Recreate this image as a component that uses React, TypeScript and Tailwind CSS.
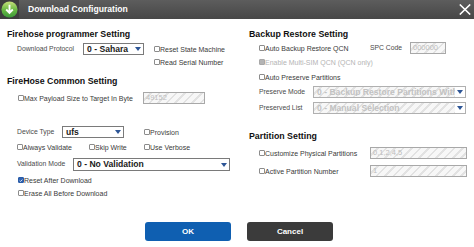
import React from 'react';

const font = { fontFamily: '"Liberation Sans", Arial, sans-serif' };

// hatched look used by the disabled boxes
const hatch =
  'bg-[repeating-linear-gradient(135deg,#f7f7f7_0px,#f7f7f7_4px,#e2e2e2_4px,#e2e2e2_6px)]';

function Check({ label, checked, disabled }: { label: string; checked?: boolean; disabled?: boolean }) {
  let box = 'border-[#8c8c8c] bg-white';
  if (checked) box = 'border-[#2a5ca8] bg-[#2f62b0]';
  if (disabled) box = 'border-[#a8a8a8] bg-[#b4b4b4]';
  return (
    <div className="flex items-center whitespace-nowrap">
      <span className={`w-[6px] h-[6px] rounded-[1px] border flex items-center justify-center ${box}`}>
        {checked && !disabled && (
          <svg viewBox="0 0 6 6" className="w-[5px] h-[5px]">
            <path d="M1 3 L2.4 4.4 L5 1.6" stroke="white" strokeWidth="1.2" fill="none" />
          </svg>
        )}
      </span>
      <span className={`text-[7px] leading-none ${disabled ? 'text-[#b4b4b4]' : 'text-[#3a3a3a]'}`}>{label}</span>
    </div>
  );
}

function Arrow() {
  return (
    <svg viewBox="0 0 6 4" className="w-[6px] h-[4px]">
      <path d="M0 0 H6 L3 4 Z" fill="#2d5596" />
    </svg>
  );
}

function Select({ value, className, disabled }: { value: string; className: string; disabled?: boolean }) {
  return (
    <div
      className={`h-full flex items-center border ${disabled ? `border-[#b0b0b0] ${hatch}` : 'border-[#7a7a7a] bg-white'} ${className}`}
    >
      <span
        className={`flex-1 pl-[3px] overflow-hidden whitespace-nowrap text-[8.6px] font-bold leading-none ${disabled ? 'text-[#c2c2c2]' : 'text-[#1a1a1a]'}`}
      >
        {value}
      </span>
      <span className={`h-full w-[10px] flex items-center justify-center ${disabled ? 'bg-white' : ''}`}>
        <Arrow />
      </span>
    </div>
  );
}

function Field({ value, className }: { value: string; className: string }) {
  return (
    <div className={`h-full flex items-center border border-[#a8a8a8] ${hatch} ${className}`}>
      <span className="pl-[2px] text-[7.5px] leading-none text-[#bdbdbd]">{value}</span>
    </div>
  );
}

function Label({ text, className }: { text: string; className: string }) {
  return <span className={`text-[6.8px] leading-none text-[#4a4a4a] whitespace-nowrap ${className}`}>{text}</span>;
}

function Header({ text, className = '' }: { text: string; className?: string }) {
  return <div className={`h-[11px] flex items-center text-[8.8px] font-bold text-[#111] leading-none ${className}`}>{text}</div>;
}

export default function App() {
  return (
    <div className="w-[474px] h-[247px] bg-white overflow-hidden" style={font}>
      {/* title bar */}
      <div className="h-[19px] flex items-center bg-gradient-to-b from-[#5d5d5d] to-[#474747]">
        <div className="w-[19px] h-[19px] flex items-center justify-center bg-[#3e3e3e]">
          <svg viewBox="0 0 18 18" className="w-[17px] h-[17px]">
            <defs>
              <linearGradient id="g" x1="0" y1="0" x2="0" y2="1">
                <stop offset="0" stopColor="#c6e07a" />
                <stop offset="0.5" stopColor="#6dbb45" />
                <stop offset="1" stopColor="#3c9a3a" />
              </linearGradient>
            </defs>
            <circle cx="9" cy="9" r="8.5" fill="url(#g)" />
            <path d="M9 4 V12 M5.5 9 L9 12.5 L12.5 9" stroke="white" strokeWidth="2" fill="none" />
          </svg>
        </div>
        <span className="ml-[9px] text-[8.6px] font-bold text-white">Download Configuration</span>
        <span className="flex-1" />
        <svg viewBox="0 0 12 11" className="w-[12px] h-[11px] mr-[3px]">
          <path d="M0.8 0.5 L11.2 10.5 M11.2 0.5 L0.8 10.5" stroke="white" strokeWidth="1.6" />
        </svg>
      </div>

      <div className="flex">
        {/* left column */}
        <div className="w-[242px] pl-[7px] pt-[10px] flex flex-col">
          <Header text="Firehose programmer Setting" />
          <div className="h-[12px] mt-[3px] ml-[10px] flex items-center">
            <Label text="Download Protocol" className="w-[66px]" />
            <Select value="0 - Sahara" className="w-[61px]" />
            <div className="ml-[10px]">
              <Check label="Reset State Machine" />
            </div>
          </div>
          <div className="h-[12px] mt-[1px] ml-[147px] flex items-center">
            <Check label="Read Serial Number" />
          </div>
          <Header text="FireHose Common Setting" className="mt-[8px]" />
          <div className="h-[12px] mt-[5px] ml-[11px] flex items-center">
            <div className="w-[125px]">
              <Check label="Max Payload Size to Target In Byte" />
            </div>
            <Field value="49152" className="w-[62px]" />
          </div>
          <div className="h-[12px] mt-[22px] ml-[10px] flex items-center">
            <Label text="Device Type" className="w-[45px]" />
            <Select value="ufs" className="w-[62px]" />
            <div className="ml-[20px]">
              <Check label="Provision" />
            </div>
          </div>
          <div className="h-[12px] mt-[3px] ml-[10px] flex items-center">
            <div className="w-[72px]">
              <Check label="Always Validate" />
            </div>
            <div className="w-[55px]">
              <Check label="Skip Write" />
            </div>
            <Check label="Use Verbose" />
          </div>
          <div className="h-[13px] mt-[5px] ml-[10px] flex items-center">
            <Label text="Validation Mode" className="w-[56px]" />
            <Select value="0 - No Validation" className="w-[157px]" />
          </div>
          <div className="h-[12px] mt-[3px] ml-[11px] flex items-center">
            <Check label="Reset After Download" checked />
          </div>
          <div className="h-[12px] mt-[1px] ml-[11px] flex items-center">
            <Check label="Erase All Before Download" />
          </div>
        </div>

        {/* right column */}
        <div className="flex-1 pl-[7px] pt-[10px] flex flex-col">
          <Header text="Backup Restore Setting" />
          <div className="h-[12px] mt-[2px] ml-[10px] flex items-center">
            <div className="w-[111px]">
              <Check label="Auto Backup Restore QCN" />
            </div>
            <Label text="SPC Code" className="w-[40px]" />
            <Field value="000000" className="w-[36px]" />
          </div>
          <div className="h-[12px] mt-[2px] ml-[10px] flex items-center">
            <Check label="Enable Multi-SIM QCN (QCN only)" disabled />
          </div>
          <div className="h-[12px] mt-[3px] ml-[10px] flex items-center">
            <Check label="Auto Preserve Partitions" />
          </div>
          <div className="h-[12px] mt-[3px] ml-[10px] flex items-center">
            <Label text="Preserve Mode" className="w-[54px]" />
            <Select value="0 - Backup Restore Partitions With" className="w-[153px]" disabled />
          </div>
          <div className="h-[12px] mt-[4px] ml-[10px] flex items-center">
            <Label text="Preserved List" className="w-[54px]" />
            <Select value="0 - Manual Selection" className="w-[153px]" disabled />
          </div>
          <Header text="Partition Setting" className="mt-[17px]" />
          <div className="h-[12px] mt-[5px] ml-[10px] flex items-center">
            <div className="w-[111px]">
              <Check label="Customize Physical Partitions" />
            </div>
            <Field value="0,1,2,4,5" className="w-[97px]" />
          </div>
          <div className="h-[12px] mt-[6px] ml-[10px] flex items-center">
            <div className="w-[111px]">
              <Check label="Active Partition Number" />
            </div>
            <Field value="1" className="w-[97px]" />
          </div>
        </div>
      </div>

      {/* buttons */}
      <div className="mt-[23px] pl-[145px] flex gap-[16px]">
        <button className="w-[86px] h-[19px] rounded-[3px] bg-[#0f5fb1] text-white text-[8px] font-bold">OK</button>
        <button className="w-[86px] h-[19px] rounded-[3px] bg-[#3b3b3b] text-white text-[8px] font-bold">Cancel</button>
      </div>
    </div>
  );
}
